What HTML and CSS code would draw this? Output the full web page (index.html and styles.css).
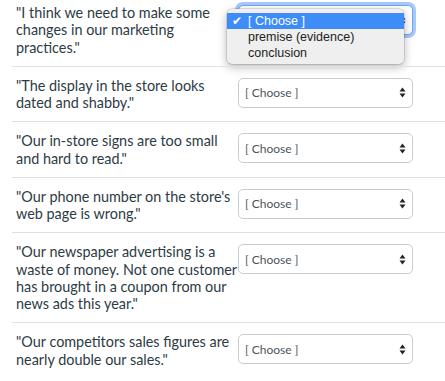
FILE: index.html
```html
<!DOCTYPE html>
<html>
<head>
<meta charset="utf-8">
<link rel="stylesheet" href="styles.css">
</head>
<body>
<div class="quiz">
  <div class="row first">
    <div class="stmt">"I think we need to make some changes in our marketing practices."</div>
    <div class="pick focused">
      <span class="val">[ Choose ]</span>
      <svg class="arrows" width="7" height="11" viewBox="0 0 7 11"><path d="M3.5 0.5 L6.5 4.5 L0.5 4.5 Z M3.5 10.5 L6.5 6.5 L0.5 6.5 Z" fill="#222"/></svg>
    </div>
    <div class="menu">
      <div class="opt sel"><span class="check">✔</span>[ Choose ]</div>
      <div class="opt">premise (evidence)</div>
      <div class="opt">conclusion</div>
    </div>
  </div>
  <div class="row">
    <div class="stmt">"The display in the store looks dated and shabby."</div>
    <div class="pick"><span class="val">[ Choose ]</span><svg class="arrows" width="7" height="11" viewBox="0 0 7 11"><path d="M3.5 0.5 L6.5 4.5 L0.5 4.5 Z M3.5 10.5 L6.5 6.5 L0.5 6.5 Z" fill="#222"/></svg></div>
  </div>
  <div class="row">
    <div class="stmt">"Our in-store signs are too small and hard to read."</div>
    <div class="pick"><span class="val">[ Choose ]</span><svg class="arrows" width="7" height="11" viewBox="0 0 7 11"><path d="M3.5 0.5 L6.5 4.5 L0.5 4.5 Z M3.5 10.5 L6.5 6.5 L0.5 6.5 Z" fill="#222"/></svg></div>
  </div>
  <div class="row">
    <div class="stmt">"Our phone number on the store's web page is wrong."</div>
    <div class="pick"><span class="val">[ Choose ]</span><svg class="arrows" width="7" height="11" viewBox="0 0 7 11"><path d="M3.5 0.5 L6.5 4.5 L0.5 4.5 Z M3.5 10.5 L6.5 6.5 L0.5 6.5 Z" fill="#222"/></svg></div>
  </div>
  <div class="row">
    <div class="stmt">"Our newspaper advertising is a waste of money. Not one customer has brought in a coupon from our news ads this year."</div>
    <div class="pick"><span class="val">[ Choose ]</span><svg class="arrows" width="7" height="11" viewBox="0 0 7 11"><path d="M3.5 0.5 L6.5 4.5 L0.5 4.5 Z M3.5 10.5 L6.5 6.5 L0.5 6.5 Z" fill="#222"/></svg></div>
  </div>
  <div class="row">
    <div class="stmt">"Our competitors sales figures are nearly double our sales."</div>
    <div class="pick"><span class="val">[ Choose ]</span><svg class="arrows" width="7" height="11" viewBox="0 0 7 11"><path d="M3.5 0.5 L6.5 4.5 L0.5 4.5 Z M3.5 10.5 L6.5 6.5 L0.5 6.5 Z" fill="#222"/></svg></div>
  </div>
</div>
</body>
</html>
```
FILE: styles.css
```css
html, body {
  margin: 0;
  padding: 0;
  background: #fff;
  overflow: hidden;
}
body {
  font-family: Lato, "Open Sans", sans-serif;
  color: #2d3b45;
}
.quiz {
  margin: -6px 0 0 12px;
  width: 433px;
  overflow: visible;
}
.row {
  position: relative;
  display: flex;
  align-items: flex-start;
  padding: 10px 0 10px 4px;
  border-top: 1px solid #dfe2e5;
}
.row.first {
  border-top: none;
}
.stmt {
  width: 222px;
  flex: none;
  font-size: 14.4px;
  line-height: 17.25px;
}
.pick {
  flex: none;
  box-sizing: border-box;
  width: 175px;
  height: 30px;
  margin-top: 1px;
  border: 1px solid #c7cdd1;
  border-radius: 5px;
  background: #fff;
  display: flex;
  align-items: center;
  justify-content: space-between;
  padding: 0 6px 0 6px;
}
.pick.focused {
  border-color: #6fa6ee;
  box-shadow: 0 0 0 3px rgba(92, 155, 245, 0.55);
}
.val {
  font-size: 12px;
  color: #4c555c;
}
.menu {
  position: absolute;
  left: 215px;
  top: 15px;
  width: 177px;
  box-sizing: border-box;
  padding: 4px 0 3px;
  background: #efefef;
  border-radius: 5px;
  box-shadow: 0 0 0 0.5px rgba(0,0,0,0.2), 0 3px 10px rgba(0,0,0,0.3);
  font-family: "Liberation Sans", Arial, sans-serif;
  font-size: 12.5px;
  color: #222;
}
.opt {
  position: relative;
  height: 16px;
  line-height: 16px;
  padding-left: 21px;
}
.opt.sel {
  background: #3d8cf7;
  color: #fff;
}
.check {
  position: absolute;
  left: 5px;
  top: 0;
  font-family: "DejaVu Sans", sans-serif;
  font-size: 12px;
  font-weight: bold;
}
```
